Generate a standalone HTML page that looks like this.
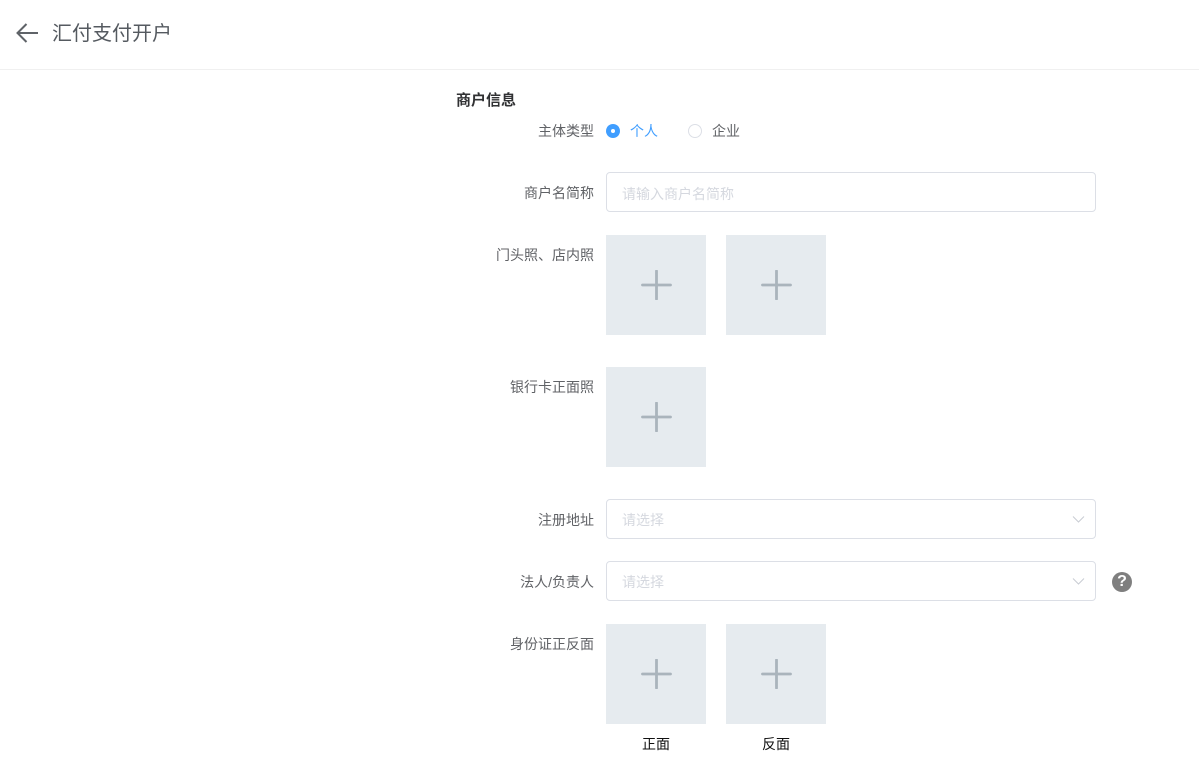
<!DOCTYPE html>
<html lang="zh-CN">
<head>
<meta charset="utf-8">
<style>
html,body{margin:0;padding:0;background:#fff}
body{position:relative;width:1199px;height:761px;overflow:hidden;font-family:"Liberation Sans","Noto Sans CJK SC",sans-serif;font-size:14px;color:#606266}
.a{position:absolute}
.t{position:absolute;line-height:20px;white-space:nowrap}
.l{position:absolute;right:605px;line-height:20px;white-space:nowrap;text-align:right}
.box{position:absolute;left:606px;width:488px;height:38px;border:1px solid #dcdfe6;border-radius:4px;background:#fff}
.ph{position:absolute;left:622px;line-height:20px;color:#d5d8df;white-space:nowrap}
.up{position:absolute;width:100px;height:100px;background:#e6ebef}
.up svg{position:absolute;left:35px;top:35px}
.chev{position:absolute;left:1072px}
</style>
</head>
<body>
<svg class="a" style="left:15px;top:22px" width="25" height="22" viewBox="0 0 25 22"><path d="M23 11H2.5M11.5 2L2.5 11L11.5 20" fill="none" stroke="#5f6368" stroke-width="2"/></svg>
<div class="t" style="left:52px;top:21px;font-size:20px;line-height:26px;color:#555a60">汇付支付开户</div>
<div class="a" style="left:0;top:69px;width:1199px;height:1px;background:#f0f0f0"></div>

<div class="t" style="left:456px;top:91px;font-size:15px;font-weight:bold;color:#303133">商户信息</div>

<div class="l" style="top:121px">主体类型</div>
<div class="a" style="left:606px;top:124px;width:14px;height:14px;border-radius:50%;background:#409eff"></div>
<div class="a" style="left:611px;top:129px;width:4px;height:4px;border-radius:50%;background:#fff"></div>
<div class="t" style="left:630px;top:121px;color:#409eff">个人</div>
<div class="a" style="left:688px;top:124px;width:12px;height:12px;border-radius:50%;border:1px solid #dcdfe6"></div>
<div class="t" style="left:712px;top:121px">企业</div>

<div class="l" style="top:183px">商户名简称</div>
<div class="box" style="top:172px"></div>
<div class="ph" style="top:184px">请输入商户名简称</div>

<div class="l" style="top:245px">门头照、店内照</div>
<div class="up" style="left:606px;top:235px"><svg width="31" height="30" viewBox="0 0 31 30"><path d="M1.5 15H29.5M15.5 1V29" stroke="#aab4bc" stroke-width="2.8" stroke-linecap="round"/></svg></div>
<div class="up" style="left:726px;top:235px"><svg width="31" height="30" viewBox="0 0 31 30"><path d="M1.5 15H29.5M15.5 1V29" stroke="#aab4bc" stroke-width="2.8" stroke-linecap="round"/></svg></div>

<div class="l" style="top:377px">银行卡正面照</div>
<div class="up" style="left:606px;top:367px"><svg width="31" height="30" viewBox="0 0 31 30"><path d="M1.5 15H29.5M15.5 1V29" stroke="#aab4bc" stroke-width="2.8" stroke-linecap="round"/></svg></div>

<div class="l" style="top:510px">注册地址</div>
<div class="box" style="top:499px"></div>
<div class="ph" style="top:510px">请选择</div>
<svg class="chev" style="top:515px" width="13" height="9" viewBox="0 0 13 9"><path d="M1 1.5L6.5 7L12 1.5" fill="none" stroke="#c8ccd3" stroke-width="1"/></svg>

<div class="l" style="top:572px">法人/负责人</div>
<div class="box" style="top:561px"></div>
<div class="ph" style="top:572px">请选择</div>
<svg class="chev" style="top:577px" width="13" height="9" viewBox="0 0 13 9"><path d="M1 1.5L6.5 7L12 1.5" fill="none" stroke="#c8ccd3" stroke-width="1"/></svg>
<div class="a" style="left:1112px;top:572px;width:20px;height:20px;border-radius:50%;background:#7f7f7f;color:#fff;font-weight:bold;font-size:16px;line-height:20px;text-align:center">?</div>

<div class="l" style="top:634px">身份证正反面</div>
<div class="up" style="left:606px;top:624px"><svg width="31" height="30" viewBox="0 0 31 30"><path d="M1.5 15H29.5M15.5 1V29" stroke="#aab4bc" stroke-width="2.8" stroke-linecap="round"/></svg></div>
<div class="up" style="left:726px;top:624px"><svg width="31" height="30" viewBox="0 0 31 30"><path d="M1.5 15H29.5M15.5 1V29" stroke="#aab4bc" stroke-width="2.8" stroke-linecap="round"/></svg></div>
<div class="t" style="left:606px;width:100px;top:734px;text-align:center;color:#111">正面</div>
<div class="t" style="left:726px;width:100px;top:734px;text-align:center;color:#111">反面</div>
</body>
</html>
